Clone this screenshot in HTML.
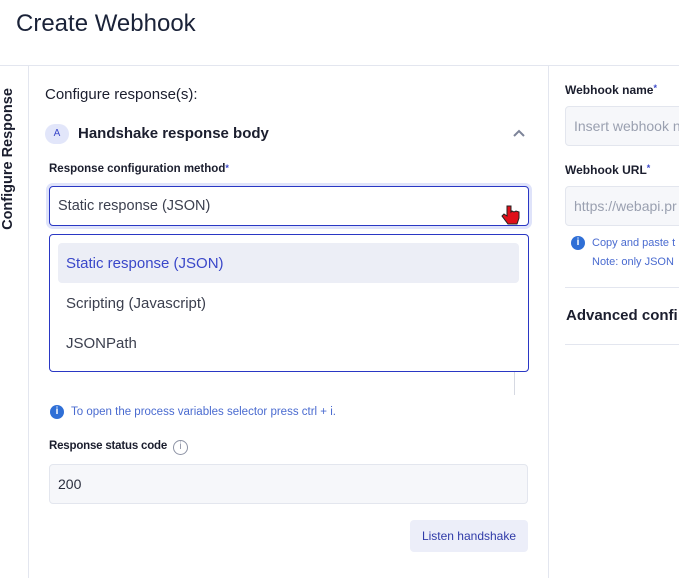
<!DOCTYPE html>
<html><head><meta charset="utf-8"><style>
*{box-sizing:border-box;margin:0;padding:0}
body{width:679px;height:578px;overflow:hidden;background:#fff;font-family:"Liberation Sans",sans-serif;color:#1b1e2e;position:relative}
.a{position:absolute}
.lbl{font-size:12px;font-weight:bold;color:#1b1e2e}
.req{color:#3a47c9;font-size:9px;vertical-align:top}
.inp{border:1px solid #e3e6ee;background:#f6f7fa;border-radius:4px}
</style></head><body>
<div class="a" style="left:16px;top:10px;font-size:24px;color:#1a2238">Create Webhook</div>
<div class="a" style="left:0;top:65px;width:679px;height:1px;background:#e3e6ef"></div>
<div class="a" style="left:28px;top:66px;width:1px;height:512px;background:#e3e6ef"></div>
<div class="a" style="left:548px;top:66px;width:1px;height:512px;background:#e3e6ef"></div>
<div class="a" style="left:-64px;top:151px;width:144px;text-align:center;transform:rotate(-90deg);font-size:14.5px;font-weight:bold;color:#1b1e2e;white-space:nowrap">Configure Response</div>

<div class="a" style="left:45px;top:86px;font-size:15px;color:#1b1e2e">Configure response(s):</div>
<div class="a" style="left:45px;top:124px;width:24px;height:20px;border-radius:10px;background:#e2e6fa;color:#3a47c9;font-size:10px;text-align:center;line-height:20px">A</div>
<div class="a" style="left:78px;top:125px;font-size:15px;font-weight:bold">Handshake response body</div>
<svg class="a" style="left:512px;top:128px" width="14" height="10"><path d="M2 8 L7 3 L12 8" stroke="#7d8499" stroke-width="2" fill="none"/></svg>

<div class="a lbl" style="left:49px;top:163px;font-size:11.5px">Response configuration method<span class="req">*</span></div>
<div class="a" style="left:46px;top:183px;width:486px;height:46px;border-radius:7px;background:#dfe3fa"></div>
<div class="a" style="left:49px;top:186px;width:480px;height:40px;border:1px solid #2a37c4;border-radius:4px;background:#fff"></div>
<div class="a" style="left:58px;top:198px;font-size:14.5px;color:#3b3f4e">Static response (JSON)</div>
<svg class="a" style="left:500px;top:202px" width="22" height="26"><path d="M7 4 v10 l-3-2 -2 2 6 8 h9 l2-6 v-6 l-3-1 -2 1 -2-1 -1 1 v-6 z" fill="#e0101a" stroke="#222" stroke-width="1"/></svg>

<div class="a" style="left:514px;top:371px;width:1px;height:24px;background:#d6d9e2"></div>
<div class="a" style="left:49px;top:234px;width:480px;height:138px;border:1px solid #2a37c4;border-radius:4px;background:#fff"></div>
<div class="a" style="left:58px;top:243px;width:461px;height:40px;background:#eceef6;border-radius:4px"></div>
<div class="a" style="left:66px;top:255px;font-size:15px;color:#3a47c9">Static response (JSON)</div>
<div class="a" style="left:66px;top:295px;font-size:15px;color:#3b3f4e">Scripting (Javascript)</div>
<div class="a" style="left:66px;top:335px;font-size:15px;color:#3b3f4e">JSONPath</div>

<div class="a" style="left:50px;top:405px;width:14px;height:14px;border-radius:7px;background:#2f6fd6;color:#fff;font-size:10px;font-weight:bold;text-align:center;line-height:14px">i</div>
<div class="a" style="left:71px;top:406px;font-size:11.5px;color:#4a6bd0">To open the process variables selector press ctrl + i.</div>
<div class="a lbl" style="left:49px;top:440px;font-size:11.5px;letter-spacing:-0.2px">Response status code</div>
<div class="a" style="left:173px;top:440px;width:15px;height:15px;border-radius:8px;border:1.5px solid #8d93a5;color:#8d93a5;font-size:10px;text-align:center;line-height:12px">i</div>
<div class="a inp" style="left:49px;top:464px;width:479px;height:40px"></div>
<div class="a" style="left:58px;top:476px;font-size:14px;color:#2a2e3e">200</div>
<div class="a" style="left:410px;top:520px;width:118px;height:32px;border-radius:4px;background:#eceef9;color:#2f3aa8;font-size:12px;text-align:center;line-height:32px">Listen handshake</div>

<div class="a lbl" style="left:565px;top:83px">Webhook name<span class="req">*</span></div>
<div class="a inp" style="left:565px;top:106px;width:130px;height:40px"></div>
<div class="a" style="left:574px;top:118px;font-size:14px;color:#9aa0b0;white-space:nowrap">Insert webhook n</div>
<div class="a lbl" style="left:565px;top:163px">Webhook URL<span class="req">*</span></div>
<div class="a inp" style="left:565px;top:186px;width:130px;height:40px"></div>
<div class="a" style="left:574px;top:198px;font-size:14px;color:#9aa0b0;white-space:nowrap">https://webapi.pr</div>
<div class="a" style="left:571px;top:236px;width:14px;height:14px;border-radius:7px;background:#2f6fd6;color:#fff;font-size:10px;font-weight:bold;text-align:center;line-height:14px">i</div>
<div class="a" style="left:592px;top:237px;font-size:11px;color:#4a6bd0;white-space:nowrap">Copy and paste t</div>
<div class="a" style="left:592px;top:256px;font-size:11px;color:#4a6bd0;white-space:nowrap">Note: only JSON</div>
<div class="a" style="left:565px;top:287px;width:114px;height:1px;background:#e3e6ef"></div>
<div class="a" style="left:566px;top:307px;font-size:15px;font-weight:bold;white-space:nowrap">Advanced confi</div>
<div class="a" style="left:565px;top:344px;width:114px;height:1px;background:#e3e6ef"></div>
</body></html>
